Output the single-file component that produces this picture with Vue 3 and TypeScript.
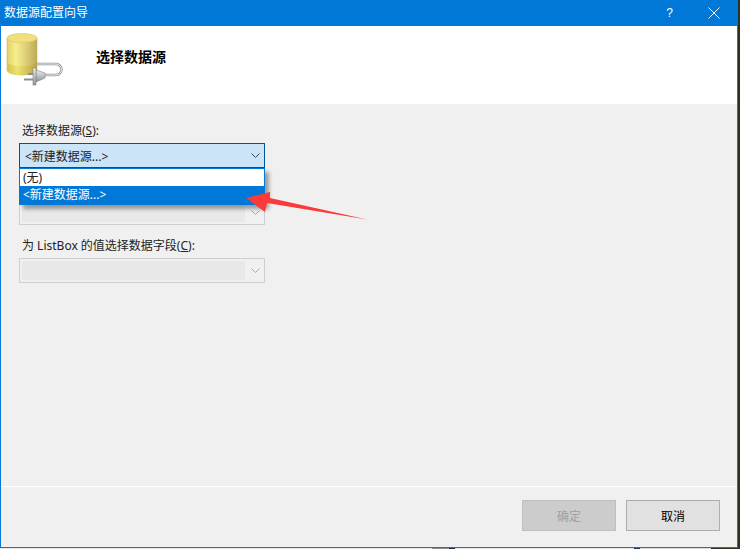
<script setup lang="ts">
const heading = "选择数据源";
</script>

<template>
  <div class="screen">
    <div class="window">
      <header class="titlebar">
        <span class="title">数据源配置向导</span>
        <div class="controls">
          <span class="help">?</span>
          <svg class="close" width="12" height="12" viewBox="0 0 12 12"><path d="M.5.5l11 11M11.5.5l-11 11" stroke="#fff" stroke-width="1" fill="none"/></svg>
        </div>
      </header>
      <section class="banner">
        <svg class="dbicon" width="64" height="64" viewBox="1 26 64 64">
          <defs>
            <linearGradient id="cyl" x1="0" x2="1" y1="0" y2="0">
              <stop offset="0" stop-color="#e4d268"/>
              <stop offset=".3" stop-color="#f6ee8e"/>
              <stop offset=".7" stop-color="#d9c774"/>
              <stop offset="1" stop-color="#bda955"/>
            </linearGradient>
            <linearGradient id="liq" x1="0" x2="1" y1="0" y2="0">
              <stop offset="0" stop-color="#d6c44a"/>
              <stop offset=".35" stop-color="#ece26c"/>
              <stop offset="1" stop-color="#b5a24a"/>
            </linearGradient>
            <linearGradient id="plug" x1="0" x2="0" y1="0" y2="1">
              <stop offset="0" stop-color="#eceff0"/>
              <stop offset="1" stop-color="#8e9396"/>
            </linearGradient>
          </defs>
          <path d="M7 38v32c0 3 7 5 15 5s15-2 15-5V38z" fill="url(#cyl)" stroke="#c4b25c" stroke-width=".6"/>
          <path d="M7 61c0 3 7 5 15 5s15-2 15-5v9c0 3-7 5-15 5s-15-2-15-5z" fill="url(#liq)"/>
          <ellipse cx="22" cy="38" rx="15" ry="4.500" fill="#efe07c" stroke="#d4c46a" stroke-width=".6"/>
          <path d="M37 64h19a5.500 5.500 0 0 1 5.500 5.500a5.500 5.500 0 0 1-5.500 5.500H45" fill="none" stroke="#8f9394" stroke-width="2.400"/>
          <path d="M37 64h19a5.500 5.500 0 0 1 5.500 5.500a5.500 5.500 0 0 1-5.500 5.500H45" fill="none" stroke="#eef0f0" stroke-width="1"/>
          <path d="M36 70l9 3v5l-9 4z" fill="url(#plug)" stroke="#808486" stroke-width=".6"/>
          <rect x="33" y="68" width="3" height="17" fill="url(#plug)" stroke="#808486" stroke-width=".6"/>
          <path d="M24 78.500h9v2h-9zM28 73h5v2h-5z" fill="#8a8d8f"/>
        </svg>
        <h1 class="heading">{{ heading }}</h1>
      </section>
      <main class="body">
        <div class="field first">
          <label>选择数据源(<u>S</u>):</label>
          <div class="combo open">
            <span class="value">&lt;新建数据源...&gt;</span>
            <svg class="chev" width="9" height="5" viewBox="0 0 9 5"><path d="M.5.500L4.500 4.500 8.500.500" fill="none" stroke="#444" stroke-width="1"/></svg>
          </div>
          <ul class="list">
            <li>(无)</li>
            <li class="sel">&lt;新建数据源...&gt;</li>
          </ul>
        </div>
        <div class="field second">
          <div class="combo disabled">
            <div class="fill"></div>
            <svg class="chev" width="9" height="5" viewBox="0 0 9 5"><path d="M.5.500L4.500 4.500 8.500.500" fill="none" stroke="#aaa" stroke-width="1"/></svg>
          </div>
        </div>
        <div class="field third">
          <label>为 ListBox 的值选择数据字段(<u>C</u>):</label>
          <div class="combo disabled">
            <div class="fill"></div>
            <svg class="chev" width="9" height="5" viewBox="0 0 9 5"><path d="M.5.500L4.500 4.500 8.500.500" fill="none" stroke="#aaa" stroke-width="1"/></svg>
          </div>
        </div>
      </main>
      <footer class="footer">
        <button class="btn off" disabled>确定</button>
        <button class="btn">取消</button>
      </footer>
    </div>
    <div class="desktop-strip"></div>
    <svg class="arrow" width="125" height="31" viewBox="0 0 125 31">
      <path d="M2 8L26 2 26 8 123 29.500 23 13 21 22z" fill="#fb3a3a"/>
    </svg>
  </div>
</template>

<style scoped>
.screen { position: relative; width: 740px; height: 549px; overflow: hidden; background: #2a3320; font-family: "Noto Sans", "Noto Sans CJK SC", sans-serif; font-size: 12px; color: #222; }
.window { box-sizing: border-box; width: 738px; height: 548px; display: flex; flex-direction: column; background: #f0f0f0; border: 1px solid #0a78d7; border-top: 0; }
.desktop-strip { height: 1px; background: linear-gradient(to right, #e6e6e6 0 432px, #8c8c8c 432px 449px, #1c3554 449px 455px, #e6e6e6 455px 634px, #1c3554 634px 640px, #d8d8d8 640px 711px, #2a3320 711px); }
.titlebar { height: 26px; flex: none; background: #0078d7; color: #fff; display: flex; align-items: center; justify-content: space-between; padding-left: 3px; }
.title { font-size: 12px; padding-bottom: 2px; }
.controls { display: flex; align-items: center; gap: 35px; padding-right: 17px; }
.help { font-size: 12px; font-family: "Liberation Sans", sans-serif; }
.close { display: block; }
.banner { height: 78px; flex: none; background: #fff; display: flex; align-items: flex-start; box-sizing: border-box; }
.dbicon { flex: none; }
.heading { margin: 21px 0 0 31px; font-size: 14px; line-height: 20px; font-weight: 700; color: #000; }
.body { flex: 1; display: flex; flex-direction: column; padding: 17px 0 0 18px; }
.field { width: 246px; position: relative; }
.field label { display: block; height: 22px; line-height: 19px; font-size: 12px; padding-left: 3px; }
.combo { box-sizing: border-box; height: 25px; width: 246px; border: 1px solid #adadad; display: flex; align-items: center; justify-content: space-between; padding-right: 4px; }
.combo.open { background: #cce4f7; border-color: #005499; padding-left: 5px; }
.combo.disabled { background: #f0f0f0; border-color: #cfcfcf; padding: 2px 4px 2px 2px; }
.fill { width: 223px; height: 100%; background: #e8e8e8; }
.chev { flex: none; }
.list { position: absolute; left: 0; top: 47px; width: 246px; box-sizing: border-box; margin: 0; padding: 0; list-style: none; background: #fff; border: 1px solid #0078d7; box-shadow: 4px 4px 4px rgba(0,0,0,.35); z-index: 2; }
.list li { height: 17px; line-height: 17px; padding-left: 3px; }
.list li.sel { height: 18px; line-height: 18px; background: #0078d7; color: #fff; }
.second { margin-top: 32px; }
.third { margin-top: 11px; }
.footer { height: 61px; flex: none; box-sizing: border-box; border-top: 1px solid #fff; display: flex; justify-content: flex-end; gap: 10px; padding: 13px 17px 0 0; }
.btn { width: 94px; height: 31px; box-sizing: border-box; font: inherit; background: #e1e1e1; border: 1px solid #adadad; color: #000; padding: 0; }
.btn.off { background: #ccc; border-color: #bfbfbf; color: #a0a0a0; }
.arrow { position: absolute; left: 244px; top: 190px; z-index: 3; }
</style>

<style>
html, body { margin: 0; background: #2a3320; }
</style>
